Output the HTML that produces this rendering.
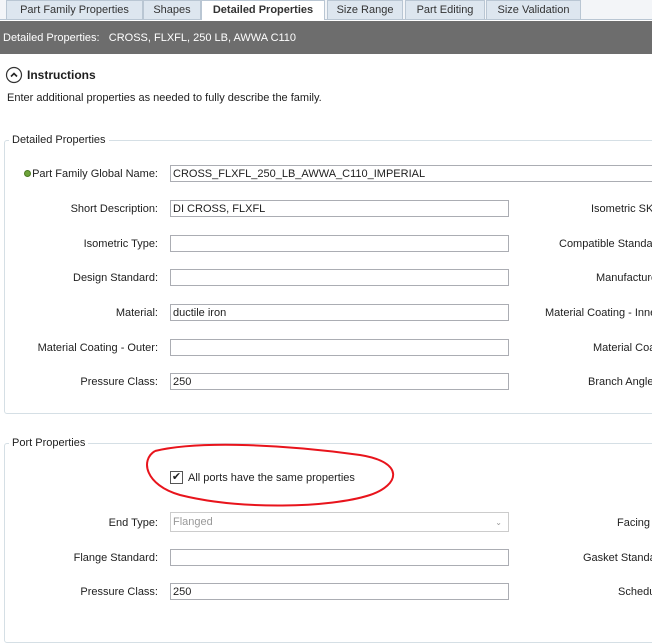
<!DOCTYPE html>
<html><head><meta charset="utf-8"><style>
*{margin:0;padding:0;box-sizing:border-box}
body{width:652px;height:606px;overflow:hidden;background:#fff;font-family:"Liberation Sans",sans-serif;font-size:11px;color:#1e1e1e;position:relative}
.a{position:absolute;white-space:nowrap}
.tab{position:absolute;top:0;height:19px;background:#dde6ef;border:1px solid #b9c6d3;border-bottom:none;line-height:18px;text-align:center;color:#333;white-space:nowrap}
.lbl{position:absolute;width:158px;left:0;text-align:right;line-height:16px;white-space:nowrap}
.rl{position:absolute;line-height:16px;white-space:nowrap}
.in{position:absolute;left:170px;width:339px;height:17px;border:1px solid #abadb3;line-height:16px;padding-left:2px;background:#fff;white-space:nowrap}
.box{position:absolute;border:1px solid #d5dfe5;border-radius:3px}
</style></head><body>
<div class="a" style="left:0;top:0;width:652px;height:20px;background:#f3f5f8;border-bottom:1px solid #b9c6d3"></div>
<div class="tab" style="left:6px;width:137px">Part Family Properties</div>
<div class="tab" style="left:143px;width:58px">Shapes</div>
<div class="tab" style="left:201px;width:124px;background:#fff;font-weight:bold;height:20px">Detailed Properties</div>
<div class="tab" style="left:327px;width:76px">Size Range</div>
<div class="tab" style="left:405px;width:80px">Part Editing</div>
<div class="tab" style="left:486px;width:95px">Size Validation</div>
<div class="a" style="left:0;top:21px;width:652px;height:33px;background:#6d6d6d;color:#fff;line-height:35px;padding-left:3px">Detailed Properties:&nbsp;&nbsp; CROSS, FLXFL, 250 LB, AWWA C110</div>
<svg class="a" style="left:5px;top:66px" width="18" height="18"><circle cx="9" cy="9" r="7.5" fill="none" stroke="#333" stroke-width="1.2"/><path d="M6,10.5 L9,7.5 L12,10.5" fill="none" stroke="#222" stroke-width="1.6"/></svg>
<div class="a" style="left:27px;top:68px;font-weight:bold;font-size:12px">Instructions</div>
<div class="a" style="left:7px;top:92px">Enter additional properties as needed to fully describe the family.</div>
<div class="box" style="left:4px;top:140px;width:660px;height:274px"></div>
<div class="a" style="left:9px;top:134px;background:#fff;padding:0 3px">Detailed Properties</div>
<div class="a" style="left:24px;top:170px;width:7px;height:7px;border-radius:50%;background:#6ea33a;border:1px solid #4a7a20"></div>
<div class="lbl" style="top:166px">Part Family Global Name:</div><div class="in" style="top:165px;width:500px">CROSS_FLXFL_250_LB_AWWA_C110_IMPERIAL</div>
<div class="lbl" style="top:201px">Short Description:</div><div class="in" style="top:200px">DI CROSS, FLXFL</div><div class="rl" style="left:591px;top:201px">Isometric SKey</div>
<div class="lbl" style="top:236px">Isometric Type:</div><div class="in" style="top:235px"></div><div class="rl" style="left:559px;top:236px">Compatible Standard</div>
<div class="lbl" style="top:270px">Design Standard:</div><div class="in" style="top:269px"></div><div class="rl" style="left:596px;top:270px">Manufacturer</div>
<div class="lbl" style="top:305px">Material:</div><div class="in" style="top:304px">ductile iron</div><div class="rl" style="left:545px;top:305px">Material Coating - Inner</div>
<div class="lbl" style="top:340px">Material Coating - Outer:</div><div class="in" style="top:339px"></div><div class="rl" style="left:593px;top:340px">Material Coating</div>
<div class="lbl" style="top:374px">Pressure Class:</div><div class="in" style="top:373px">250</div><div class="rl" style="left:588px;top:374px">Branch Angle</div>
<div class="box" style="left:4px;top:443px;width:660px;height:200px"></div>
<div class="a" style="left:9px;top:437px;background:#fff;padding:0 3px">Port Properties</div>
<div class="a" style="left:170px;top:471px;width:13px;height:13px;border:1px solid #555;text-align:center;line-height:11px;font-size:11px">✔</div>
<div class="a" style="left:188px;top:472px">All ports have the same properties</div>
<div class="lbl" style="top:515px">End Type:</div><div class="in" style="top:512px;height:20px;line-height:19px;color:#999;border-color:#ccc">Flanged<span style="position:absolute;right:6px;font-size:8px">⌄</span></div><div class="rl" style="left:617px;top:515px">Facing</div>
<div class="lbl" style="top:550px">Flange Standard:</div><div class="in" style="top:549px"></div><div class="rl" style="left:583px;top:550px">Gasket Standard</div>
<div class="lbl" style="top:584px">Pressure Class:</div><div class="in" style="top:583px">250</div><div class="rl" style="left:618px;top:584px">Schedule</div>
<svg class="a" style="left:0;top:0" width="652" height="606"><path d="M155,451 C200,440 290,445 360,455 C405,462 400,485 370,495 C330,508 240,510 180,495 C145,485 140,460 155,451" fill="none" stroke="#e8141c" stroke-width="2"/></svg>
</body></html>
